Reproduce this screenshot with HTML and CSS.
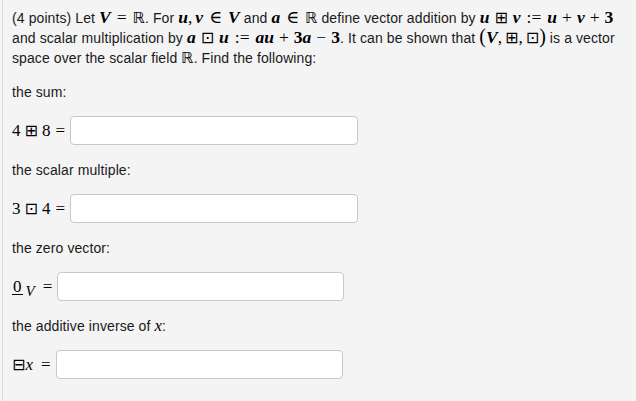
FILE: index.html
```html
<!DOCTYPE html>
<html>
<head>
<meta charset="utf-8">
<link rel="stylesheet" href="styles.css">
</head>
<body>
<div class="problem">
  <p class="intro">(4 points) Let <span class="m"><b class="bi">V</b><span class="rel">=</span><span class="ds">ℝ</span></span>. For <span class="m"><b class="bi">u</b>,<span class="thin"></span><b class="bi">v</b><span class="rel">∈</span><b class="bi">V</b></span> and <span class="m"><b class="bi">a</b><span class="rel">∈</span><span class="ds">ℝ</span></span> define vector addition by <span class="m"><b class="bi">u</b><span class="bin sym">⊞</span><b class="bi">v</b><span class="rel">:=</span><b class="bi">u</b><span class="bin">+</span><b class="bi">v</b><span class="bin">+</span><b>3</b></span><br>and scalar multiplication by <span class="m"><b class="bi">a</b><span class="bin sym">⊡</span><b class="bi">u</b><span class="rel">:=</span><b class="bi">au</b><span class="bin">+</span><b>3</b><b class="bi">a</b><span class="bin">−</span><b>3</b></span>. It can be shown that <span class="m"><span class="big">(</span><b class="bi">V</b>,<span class="thin"></span><span class="sym">⊞</span>,<span class="thin"></span><span class="sym">⊡</span><span class="big">)</span></span> is a vector<br>space over the scalar field <span class="m"><span class="ds">ℝ</span></span>. Find the following:</p>

  <p class="label first">the sum:</p>
  <div class="row">
    <span class="m expr"><span class="num">4</span><span class="bin sym">⊞</span><span class="num">8</span><span class="rel eq">=</span></span>
    <input class="ans" type="text">
  </div>

  <p class="label">the scalar multiple:</p>
  <div class="row">
    <span class="m expr"><span class="num">3</span><span class="bin sym">⊡</span><span class="num">4</span><span class="rel eq">=</span></span>
    <input class="ans" type="text">
  </div>

  <p class="label">the zero vector:</p>
  <div class="row">
    <span class="m expr"><span class="zero">0</span><span class="sub">V</span><span class="rel eq wide">=</span></span>
    <input class="ans short" type="text">
  </div>

  <p class="label">the additive inverse of <span class="m"><i class="it">x</i></span>:</p>
  <div class="row">
    <span class="m expr"><span class="sym">⊟</span><i class="it">x</i><span class="rel eq wide">=</span></span>
    <input class="ans short" type="text">
  </div>
</div>
</body>
</html>
```
FILE: styles.css
```css
html, body {
  margin: 0;
  padding: 0;
  background: #f4f4f4;
}
body {
  font-family: "Liberation Sans", Arial, sans-serif;
  font-size: 14px;
  letter-spacing: 0.1px;
  color: #1a1a1a;
}
.problem {
  margin-left: 2px;
  border-left: 1px solid #dcdcdc;
  min-height: 401px;
  box-sizing: border-box;
  padding: 8px 10px 0 9px;
  display: flex;
  flex-direction: column;
  align-items: flex-start;
}
.intro {
  margin: 0;
  line-height: 20px;
  white-space: nowrap;
}
.m {
  font-family: "Liberation Serif", "DejaVu Serif", serif;
  font-size: 17px;
  letter-spacing: 0;
  color: #000;
  white-space: nowrap;
  line-height: 0;
}
.intro .m { font-size: 17.5px; }
.m b { font-weight: bold; }
.bi { font-style: italic; font-weight: bold; }
.it { font-style: italic; }
.rel { margin: 0 5px; font-weight: normal; }
.bin { margin: 0 4px; font-weight: normal; }
.intro .rel { margin: 0 6px; }
.intro .bin { margin: 0 5px; }
.thin { display: inline-block; width: 3px; }
.ds { font-family: "DejaVu Sans", sans-serif; font-size: 15px; }
.intro .ds { font-size: 15.5px; }
.sym {
  font-family: "DejaVu Sans", sans-serif;
  font-size: 16px;
  font-weight: normal;
}
.big { font-size: 20px; }
.label {
  margin: 15px 0 0 0;
  line-height: 20px;
}
.label.first { margin-top: 14px; }
.row {
  display: flex;
  align-items: center;
  margin-top: 14px;
  height: 29px;
}
.expr { line-height: 29px; }
.eq { margin-right: 5px; }
.eq.wide { margin-left: 8px; }
.num { font-weight: normal; }
.zero {
  display: inline-block;
  line-height: 14px;
  border-bottom: 1px solid #000;
  padding: 0 1px;
}
.sub {
  font-style: italic;
  font-size: 15px;
  position: relative;
  top: 4px;
  margin-left: 3px;
}
.ans {
  width: 288px;
  height: 29px;
  box-sizing: border-box;
  border: 1px solid #c8c8c8;
  border-radius: 4px;
  background: #fff;
  margin: 0;
  padding: 4px 6px;
}
.ans.short { width: 287px; }
```
